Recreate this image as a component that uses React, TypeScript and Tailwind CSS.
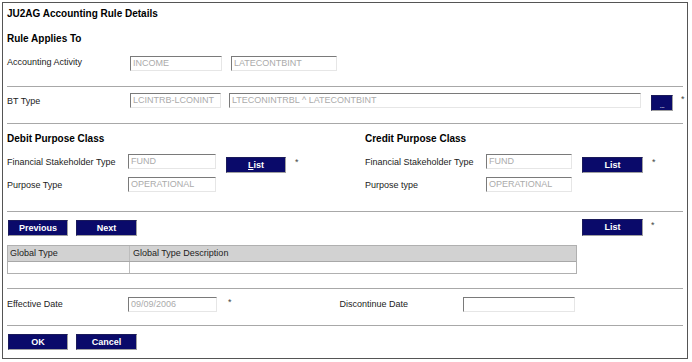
import React from "react";

/* ─── Small pieces ───────────────────────────────────────── */

function Field({ w, value = "", className = "" }: { w: string; value?: string; className?: string }) {
  return (
    <div
      className={`${w} h-[15px] shrink-0 bg-white border border-t-[#7a7a7a] border-l-[#7a7a7a] border-r-[#e6e6e6] border-b-[#e6e6e6] pl-[2px] text-[9px] leading-[13px] text-[#ababab] overflow-hidden whitespace-nowrap ${className}`}
    >
      {value}
    </div>
  );
}

function Btn({
  w,
  children,
  className = "",
}: {
  w: string;
  children: React.ReactNode;
  className?: string;
}) {
  return (
    <div
      className={`${w} h-[16px] shrink-0 bg-[#0a0a6a] border border-t-[#1a1a5a] border-l-[#1a1a5a] border-r-[#a0a0a0] border-b-[#a0a0a0] flex items-center justify-center text-white text-[9px] font-bold leading-none ${className}`}
    >
      {children}
    </div>
  );
}

function Star({ className = "" }: { className?: string }) {
  return <span className={`text-[9px] leading-none text-[#444] ${className}`}>*</span>;
}

function Rule() {
  return <div className="ml-[4px] w-[676px] h-px bg-[#a8a8a8]" />;
}

/* ═══════════════════════════════════════════════════════════════
   PAGE
   ═══════════════════════════════════════════════════════════════ */

export default function App() {
  return (
    <div className="w-[692px] h-[362px] bg-white pt-[2px] pl-[2px] font-['Liberation_Sans',Arial,sans-serif] text-[#222]">
      <div className="w-[686px] h-[357px] border border-[#555] flex flex-col">
        {/* Title */}
        <div className="mt-[2px] h-[16px] pl-[4px] flex items-center text-[10px] font-bold text-black">
          JU2AG Accounting Rule Details
        </div>

        {/* Rule applies to */}
        <div className="mt-[9px] h-[16px] pl-[4px] flex items-center text-[10px] font-bold text-black">
          Rule Applies To
        </div>

        <div className="mt-[9px] h-[16px] pl-[4px] flex items-center text-[9px]">
          <span className="w-[123px] shrink-0 -mt-[1px]">Accounting Activity</span>
          <Field w="w-[92px]" value="INCOME" />
          <Field w="w-[106px]" value="LATECONTBINT" className="ml-[9px]" />
        </div>

        <div className="mt-[15px]">
          <Rule />
        </div>

        {/* BT type */}
        <div className="mt-[6px] h-[18px] pl-[4px] flex items-start text-[9px]">
          <span className="w-[123px] shrink-0 mt-[2px]">BT Type</span>
          <Field w="w-[91px]" value="LCINTRB-LCONINT" />
          <Field w="w-[412px]" value="LTECONINTRBL ^ LATECONTBINT" className="ml-[8px]" />
          <Btn w="w-[22px]" className="ml-[10px] mt-[2px] pt-[4px] !text-[7px] !font-normal tracking-[-0.5px]">
            ...
          </Btn>
          <Star className="ml-[8px] mt-[2px]" />
        </div>

        <div className="mt-[12px]">
          <Rule />
        </div>

        {/* Purpose classes */}
        <div className="flex pl-[4px]">
          <div className="w-[358px] shrink-0 flex flex-col">
            <div className="mt-[6px] h-[16px] flex items-center text-[10px] font-bold text-black">
              Debit Purpose Class
            </div>
            <div className="mt-[8px] h-[18px] flex items-start text-[9px]">
              <span className="w-[121px] shrink-0 mt-[2px]">Financial Stakeholder Type</span>
              <Field w="w-[88px]" value="FUND" />
              <Btn w="w-[60px]" className="ml-[10px] mt-[3px]">
                <span>
                  <span className="underline">L</span>ist
                </span>
              </Btn>
              <Star className="ml-[9px] mt-[4px]" />
            </div>
            <div className="mt-[5px] h-[16px] flex items-start text-[9px]">
              <span className="w-[121px] shrink-0 mt-[2px]">Purpose Type</span>
              <Field w="w-[88px]" value="OPERATIONAL" />
            </div>
          </div>
          <div className="flex flex-col">
            <div className="mt-[6px] h-[16px] flex items-center text-[10px] font-bold text-black">
              Credit Purpose Class
            </div>
            <div className="mt-[8px] h-[18px] flex items-start text-[9px]">
              <span className="w-[121px] shrink-0 mt-[2px]">Financial Stakeholder Type</span>
              <Field w="w-[86px]" value="FUND" />
              <Btn w="w-[61px]" className="ml-[10px] mt-[3px]">
                List
              </Btn>
              <Star className="ml-[9px] mt-[4px]" />
            </div>
            <div className="mt-[5px] h-[16px] flex items-start text-[9px]">
              <span className="w-[121px] shrink-0 mt-[2px]">Purpose type</span>
              <Field w="w-[86px]" value="OPERATIONAL" />
            </div>
          </div>
        </div>

        <div className="mt-[18px]">
          <Rule />
        </div>

        {/* Navigation + list */}
        <div className="mt-[7px] h-[18px] pl-[5px] flex items-start">
          <Btn w="w-[60px]" className="mt-[1px]">Previous</Btn>
          <Btn w="w-[61px]" className="ml-[8px] mt-[1px]">Next</Btn>
          <Btn w="w-[61px]" className="ml-[445px] !h-[17px]">List</Btn>
          <Star className="ml-[8px] mt-[2px]" />
        </div>

        {/* Grid */}
        <div className="mt-[8px] ml-[4px] w-[570px] border border-[#b0b0b0] text-[9px]">
          <div className="flex h-[16px] bg-[#d2d2d2] border-b border-[#a8a8a8]">
            <div className="w-[122px] pl-[2px] flex items-center border-r border-[#bdbdbd]">Global Type</div>
            <div className="flex-1 pl-[3px] flex items-center">Global Type Description</div>
          </div>
          <div className="flex h-[11px]">
            <div className="w-[122px] border-r border-[#bdbdbd]" />
            <div className="flex-1" />
          </div>
        </div>

        <div className="mt-[14px]">
          <Rule />
        </div>

        {/* Dates */}
        <div className="mt-[8px] h-[16px] pl-[4px] flex items-start text-[9px]">
          <span className="w-[121px] shrink-0 mt-[1px]">Effective Date</span>
          <Field w="w-[89px]" value="09/09/2006" />
          <Star className="ml-[11px] mt-[1px]" />
          <span className="ml-[108px] mt-[1px] w-[123px] shrink-0">Discontinue Date</span>
          <Field w="w-[112px]" />
        </div>

        <div className="mt-[12px]">
          <Rule />
        </div>

        {/* Actions */}
        <div className="mt-[8px] pl-[5px] flex">
          <Btn w="w-[60px]">OK</Btn>
          <Btn w="w-[61px]" className="ml-[8px]">Cancel</Btn>
        </div>
      </div>
    </div>
  );
}
